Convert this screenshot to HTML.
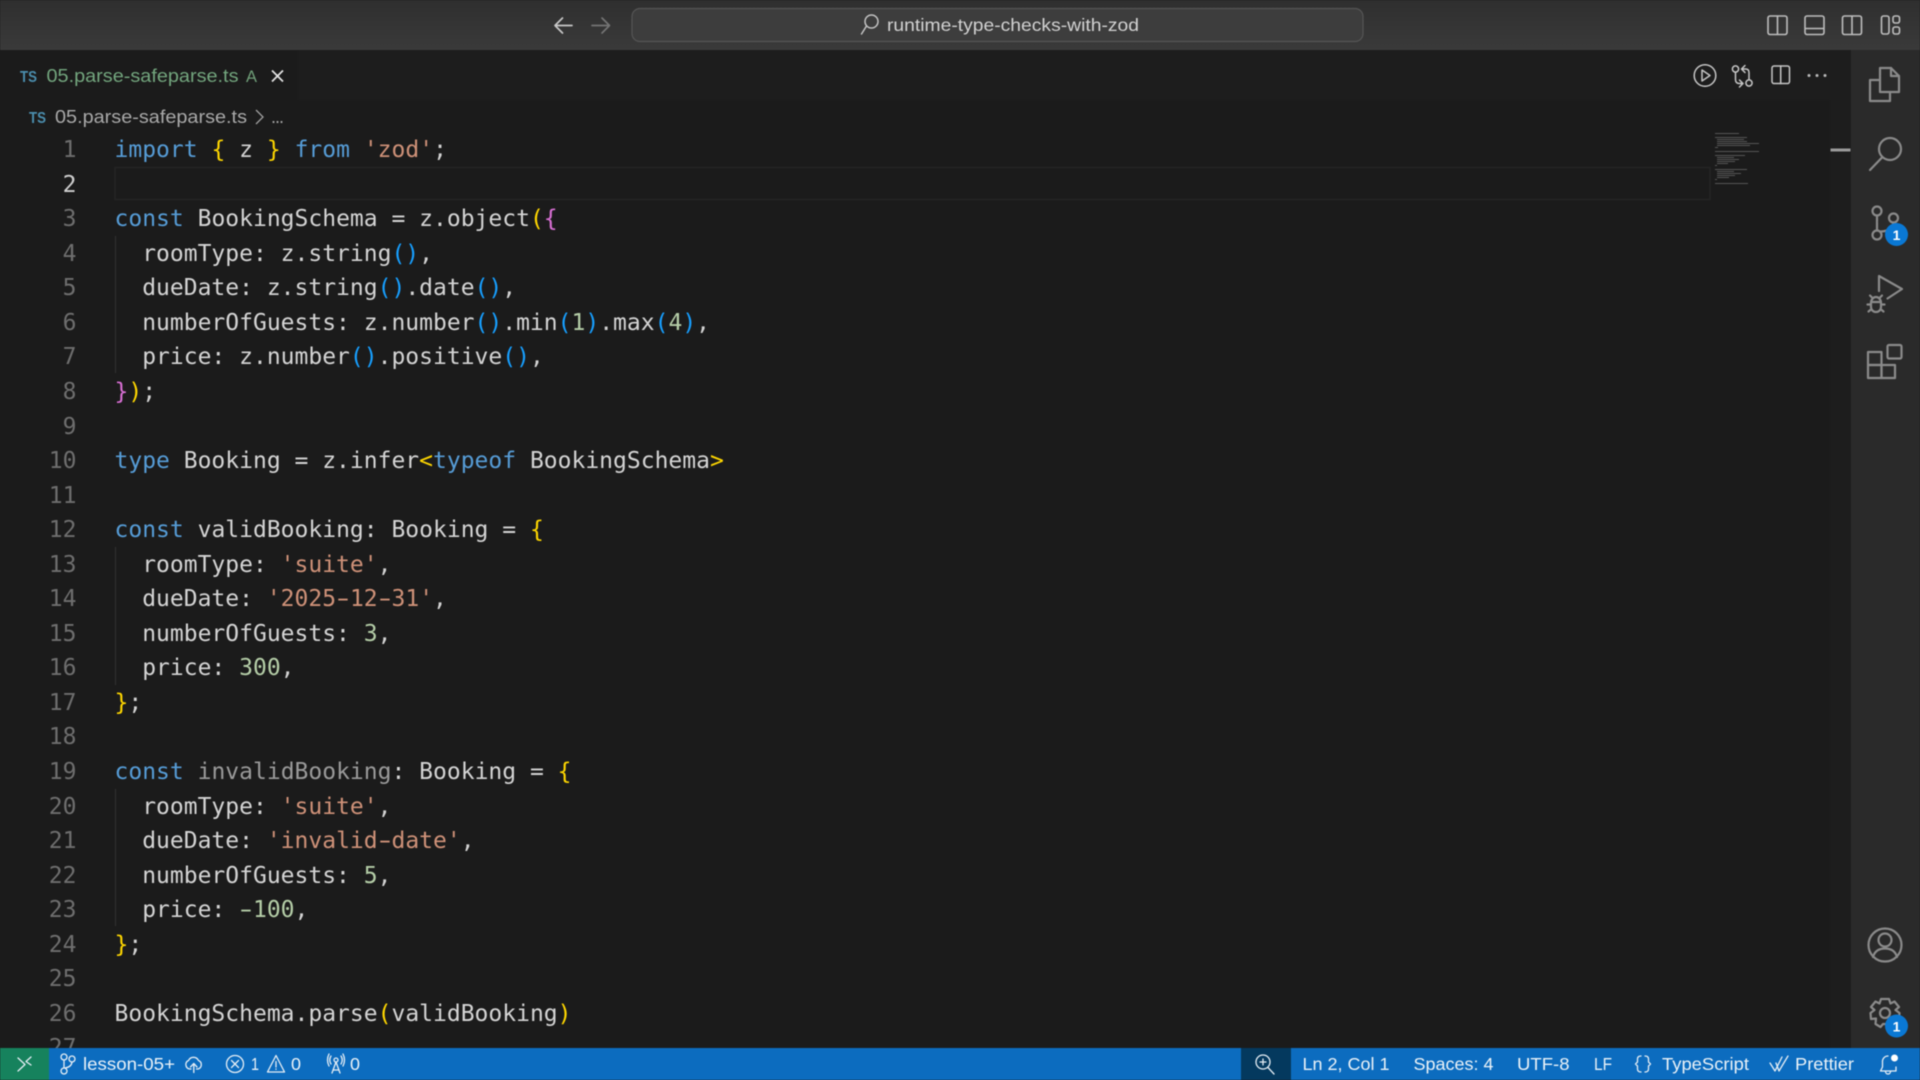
<!DOCTYPE html>
<html lang="en"><head><meta charset="utf-8"><title>05.parse-safeparse.ts</title>
<style>
html,body{margin:0;padding:0;width:1920px;height:1080px;overflow:hidden;background:#1b1b1b}
#root{position:relative;width:1920px;height:1080px;overflow:hidden;filter:blur(.4px)}
svg{position:absolute;left:0;top:0}
#code{position:absolute;left:114.500px;top:133.200px;width:1500px;height:915px;overflow:hidden;margin:0;font:23px/34.55px "DejaVu Sans Mono","Liberation Mono",monospace;color:#d4d4d4;white-space:pre}
#nums{position:absolute;left:30px;top:133.200px;width:46.500px;height:915px;overflow:hidden;text-align:right;margin:0;font:23px/34.55px "DejaVu Sans Mono","Liberation Mono",monospace;color:#6e6e6e;white-space:pre}
#nums b{font-weight:normal;color:#cfcfcf}
i{font-style:normal}
.k{color:#569cd6}.s{color:#ce9178}.n{color:#b5cea8}.y{color:#ffd700}.p{color:#da70d6}.b{color:#179fff}.d{color:#9a9a9a}
.h{display:inline-block;transform:scaleX(1.6)}
text{font-family:"Liberation Sans",sans-serif}
</style></head><body><div id="root">
<svg width="1920" height="1080" viewBox="0 0 1920 1080" xmlns="http://www.w3.org/2000/svg">
<defs><linearGradient id="tb" x1="0" y1="0" x2="0" y2="1"><stop offset="0" stop-color="#2f2f2f"/><stop offset="1" stop-color="#3a3a3a"/></linearGradient></defs>
<rect width="1920" height="1080" fill="#1b1b1b"/>
<rect width="1920" height="50" fill="url(#tb)"/>
<rect y="50" width="1851" height="50" fill="#1d1d1d"/>
<rect y="50" width="298" height="50" fill="#1b1b1b"/>
<rect x="1851" y="50" width="69" height="998" fill="#2a2a2a"/>
<rect x="1830" y="100" width="21" height="948" fill="#1d1d1d"/>
<!-- current line -->
<rect x="115" y="167.500" width="1595" height="32" fill="none" stroke="#252525" stroke-width="1.500"/>
<!-- indent guides -->
<path d="M115.500 236V373M115.500 547V685M115.500 789V926" stroke="#2f2f2f" stroke-width="1.200" fill="none"/>
<!-- nav arrows -->
<g fill="none" stroke-width="1.700" stroke-linecap="round" stroke-linejoin="round">
<path d="M555 25.500H572M562.500 18L555 25.500L562.500 33" stroke="#c8c8c8"/>
<path d="M592 25.500H609.500M602 18L609.500 25.500L602 33" stroke="#747474"/>
</g>
<rect x="632" y="8.500" width="731" height="33" rx="8" fill="#3d3d3d" stroke="#555" stroke-width="1.200"/>
<g fill="none" stroke="#c4c4c4" stroke-width="1.500" stroke-linecap="round"><circle cx="871.500" cy="21.500" r="6.500"/><path d="M866.500 26L861.500 34"/></g>
<text x="887" y="31" font-size="17.500" fill="#d2d2d2" textLength="252" lengthAdjust="spacingAndGlyphs">runtime-type-checks-with-zod</text>
<!-- title layout icons -->
<g fill="none" stroke="#bdbdbd" stroke-width="1.600">
<rect x="1768" y="16" width="19" height="18.500" rx="2"/><path d="M1777.500 16V34.500"/>
<rect x="1805" y="16" width="19" height="18.500" rx="2"/><path d="M1805 28.500H1824"/>
<rect x="1842.500" y="16" width="19" height="18.500" rx="2"/><path d="M1852 16V34.500"/>
<rect x="1881.500" y="16" width="7.500" height="18" rx="2"/><rect x="1893" y="16" width="6.500" height="7" rx="2"/><rect x="1893" y="27" width="6.500" height="7" rx="2"/>
</g>
<!-- tab -->
<text x="20" y="82" font-size="16" font-weight="bold" fill="#4b8eae" textLength="17" lengthAdjust="spacingAndGlyphs">TS</text>
<text x="46.500" y="82" font-size="18" fill="#73a67e" textLength="192" lengthAdjust="spacingAndGlyphs">05.parse-safeparse.ts</text>
<text x="246" y="82" font-size="17" fill="#6f9e78" textLength="11" lengthAdjust="spacingAndGlyphs">A</text>
<path d="M272 70.500L283 81.500M283 70.500L272 81.500" stroke="#e6e6e6" stroke-width="1.700" fill="none"/>
<!-- breadcrumb -->
<text x="29" y="123" font-size="16" font-weight="bold" fill="#4b8eae" textLength="17" lengthAdjust="spacingAndGlyphs">TS</text>
<text x="55" y="123" font-size="18" fill="#a9a9a9" textLength="192" lengthAdjust="spacingAndGlyphs">05.parse-safeparse.ts</text>
<path d="M256 110L263 117L256 124" stroke="#a0a0a0" stroke-width="1.300" fill="none"/>
<text x="271" y="123" font-size="18" fill="#a9a9a9" textLength="13">...</text>
<!-- editor actions -->
<g fill="none" stroke="#c6c6c6" stroke-width="1.500" stroke-linejoin="round" stroke-linecap="round">
<circle cx="1705" cy="75.500" r="10.800"/><path d="M1702 70L1710 75.500L1702 81Z"/>
<circle cx="1735.500" cy="69" r="3.100"/><circle cx="1749" cy="83" r="3.100"/>
<path d="M1735.500 72.500V79.500Q1735.500 83.500 1739.500 83.500H1743M1739.500 80L1743 83.500L1739.500 87"/>
<path d="M1749 79.500V72.500Q1749 69 1745.500 69H1741.500M1745 65.500L1741.500 69L1745 72.500"/>
<rect x="1772" y="66" width="17.500" height="17.500" rx="2"/><path d="M1780.700 66V83.500"/>
</g>
<g fill="#b8b8b8"><circle cx="1809" cy="75.500" r="1.500"/><circle cx="1817" cy="75.500" r="1.500"/><circle cx="1825" cy="75.500" r="1.500"/></g>
<!-- overview mark -->
<rect x="1830.500" y="148.500" width="20" height="3" fill="#9a9a9a"/>
<!-- minimap -->
<g fill="#8f8f8f" opacity=".5">
<rect x="1715" y="133" width="24" height="1"/>
<rect x="1715" y="137" width="32" height="1"/>
<rect x="1717" y="139" width="27" height="1"/><rect x="1717" y="141" width="30" height="1"/>
<rect x="1717" y="143" width="42" height="1"/><rect x="1717" y="145" width="33" height="1"/>
<rect x="1715" y="147" width="3" height="1"/>
<rect x="1715" y="151" width="44" height="1"/>
<rect x="1715" y="155" width="30" height="1"/>
<rect x="1717" y="157" width="17" height="1"/><rect x="1717" y="159" width="22" height="1"/>
<rect x="1717" y="161" width="18" height="1"/><rect x="1717" y="163" width="11" height="1"/>
<rect x="1715" y="165" width="2" height="1"/>
<rect x="1715" y="169" width="32" height="1"/>
<rect x="1717" y="171" width="17" height="1"/><rect x="1717" y="173" width="24" height="1"/>
<rect x="1717" y="175" width="18" height="1"/><rect x="1717" y="177" width="12" height="1"/>
<rect x="1715" y="179" width="2" height="1"/>
<rect x="1715" y="183" width="33" height="1"/>
</g>
<!-- activity bar -->
<g fill="none" stroke="#8a8a8a" stroke-width="2.200" stroke-linejoin="round" stroke-linecap="round">
<path d="M1880 68H1891L1899 76V92H1880Z"/><path d="M1891 68V76H1899"/>
<path d="M1880 80H1870V101H1890V92"/>
<circle cx="1890" cy="149" r="11"/><path d="M1882 157.500L1870 170"/>
<circle cx="1877" cy="211" r="4.500"/><circle cx="1877" cy="235" r="4.500"/><circle cx="1893.500" cy="218" r="4.500"/>
<path d="M1877 215.500V230.500M1881 231.500Q1892 231 1893.500 222.500"/>
<path d="M1879 291V276L1902 289L1887.500 298.500"/>
<path d="M1871 303A5 6 0 0 1 1881 303V307A5 5 0 0 1 1871 307ZM1871 302H1881M1872 297.500L1870 295.500M1880 297.500L1882 295.500M1871 304.500H1867.500M1881 304.500H1884.500M1871.500 309L1868.500 311.500M1880.500 309L1883.500 311.500"/>
<rect x="1868" y="352" width="13.500" height="13"/><rect x="1868" y="365" width="13.500" height="13"/><rect x="1881.500" y="365" width="13.500" height="13"/><rect x="1887.500" y="345" width="14" height="13.500" rx="1.500"/>
<circle cx="1885" cy="945" r="16.500"/><circle cx="1885" cy="940" r="6.500"/><path d="M1873 957C1875 950 1880 948.500 1885 948.500S1895 950 1897 957"/>
<circle cx="1885" cy="1013" r="5"/>
<path d="M1881 999H1889L1890.500 1003.500L1894.500 1001.500L1899 1007L1895.500 1010L1899.500 1013L1899 1019L1894.500 1018.500L1895 1024L1889.500 1027L1887 1024H1883L1880.500 1027L1875.500 1024L1876 1018.500L1871 1019L1870.500 1013L1874.500 1010L1871 1007L1875.500 1001.500L1879.500 1003.500Z"/>
</g>
<circle cx="1896.500" cy="234.500" r="11.500" fill="#0a78d4"/>
<text x="1896.500" y="240" font-size="14" font-weight="bold" fill="#fff" text-anchor="middle">1</text>
<circle cx="1896.500" cy="1026" r="11.500" fill="#0a78d4"/>
<text x="1896.500" y="1031.500" font-size="14" font-weight="bold" fill="#fff" text-anchor="middle">1</text>
<!-- status bar -->
<rect y="1048" width="1920" height="32" fill="#0c6cbf"/>
<rect y="1048" width="49" height="32" fill="#16825d"/>
<rect x="1241" y="1048" width="50" height="32" fill="#04395e"/>
<g fill="none" stroke="#e6eef5" stroke-width="1.300" stroke-linecap="round" stroke-linejoin="round">
<path d="M18 1058L25 1064.500L18 1071M31 1057L26 1061.500L31 1065"/>
<circle cx="64" cy="1057" r="3"/><circle cx="64" cy="1071" r="3"/><circle cx="72" cy="1059" r="3"/><path d="M64 1060V1068M65 1068Q71.500 1067 72 1062"/>
<path d="M191 1069H189.500A4.500 4.500 0 0 1 188.500 1060.500A5.500 5.500 0 0 1 198.500 1060.500A4.500 4.500 0 0 1 198 1069H196.500M193.800 1072.500V1064M190.500 1067L193.800 1063.500L197 1067"/>
<circle cx="235" cy="1064" r="8.500"/><path d="M231.500 1060.500L238.500 1067.500M238.500 1060.500L231.500 1067.500"/>
<path d="M276 1055.500L284.500 1072H267.500ZM276 1061.500V1067M276 1069V1069.300"/>
<circle cx="336" cy="1060" r="2"/><path d="M336 1062L332 1073M336 1062L340 1073M333 1070H339M331 1056Q328.500 1060 331 1064M341 1056Q343.500 1060 341 1064M329 1054Q326 1060 329 1066M343 1054Q346 1060 343 1066"/>
<circle cx="1263" cy="1062" r="7"/><path d="M1268 1067.500L1274 1074M1260 1062H1266M1263 1059V1065"/>
<path d="M1641 1056Q1637.500 1056 1637.500 1059V1062L1635.500 1064L1637.500 1066V1069Q1637.500 1072 1641 1072M1645 1056Q1648.500 1056 1648.500 1059V1062L1650.500 1064L1648.500 1066V1069Q1648.500 1072 1645 1072"/>
<path d="M1770 1063L1775 1071L1782 1057M1776 1063L1779 1071L1788 1056"/>
<path d="M1888 1056A5.500 5.500 0 0 0 1882.500 1062V1067L1880.500 1071H1896V1067M1885.500 1071.500A2.500 2.500 0 0 0 1890.500 1071.500"/>
</g>
<circle cx="1894.500" cy="1058" r="3.500" fill="#fff"/>
<g font-size="17.500" fill="#eaf2f8">
<text x="83" y="1070" textLength="92" lengthAdjust="spacingAndGlyphs">lesson-05+</text>
<text x="251" y="1070" textLength="8" lengthAdjust="spacingAndGlyphs">1</text>
<text x="291" y="1070" textLength="10" lengthAdjust="spacingAndGlyphs">0</text>
<text x="350" y="1070" textLength="10" lengthAdjust="spacingAndGlyphs">0</text>
<text x="1302.500" y="1070" textLength="87" lengthAdjust="spacingAndGlyphs">Ln 2, Col 1</text>
<text x="1413.500" y="1070" textLength="80" lengthAdjust="spacingAndGlyphs">Spaces: 4</text>
<text x="1517" y="1070" textLength="52.500" lengthAdjust="spacingAndGlyphs">UTF-8</text>
<text x="1594" y="1070" textLength="18" lengthAdjust="spacingAndGlyphs">LF</text>
<text x="1662" y="1070" textLength="87" lengthAdjust="spacingAndGlyphs">TypeScript</text>
<text x="1795" y="1070" textLength="59" lengthAdjust="spacingAndGlyphs">Prettier</text>
</g>
</svg>
<pre id="nums">1
<b>2</b>
3
4
5
6
7
8
9
10
11
12
13
14
15
16
17
18
19
20
21
22
23
24
25
26
27</pre>
<pre id="code"><i class="k">import</i> <i class="y">{</i> z <i class="y">}</i> <i class="k">from</i> <i class="s">'zod'</i>;

<i class="k">const</i> BookingSchema = z.object<i class="y">(</i><i class="p">{</i>
  roomType: z.string<i class="b">()</i>,
  dueDate: z.string<i class="b">()</i>.date<i class="b">()</i>,
  numberOfGuests: z.number<i class="b">()</i>.min<i class="b">(</i><i class="n">1</i><i class="b">)</i>.max<i class="b">(</i><i class="n">4</i><i class="b">)</i>,
  price: z.number<i class="b">()</i>.positive<i class="b">()</i>,
<i class="p">}</i><i class="y">)</i>;

<i class="k">type</i> Booking = z.infer<i class="y">&lt;</i><i class="k">typeof</i> BookingSchema<i class="y">&gt;</i>

<i class="k">const</i> validBooking: Booking = <i class="y">{</i>
  roomType: <i class="s">'suite'</i>,
  dueDate: <i class="s">'2025<i class="h">-</i>12<i class="h">-</i>31'</i>,
  numberOfGuests: <i class="n">3</i>,
  price: <i class="n">300</i>,
<i class="y">}</i>;

<i class="k">const</i> <i class="d">invalidBooking</i>: Booking = <i class="y">{</i>
  roomType: <i class="s">'suite'</i>,
  dueDate: <i class="s">'invalid<i class="h">-</i>date'</i>,
  numberOfGuests: <i class="n">5</i>,
  price: <i class="n"><i class="h">-</i>100</i>,
<i class="y">}</i>;

BookingSchema.parse<i class="y">(</i>validBooking<i class="y">)</i>
</pre>
</div></body></html>
